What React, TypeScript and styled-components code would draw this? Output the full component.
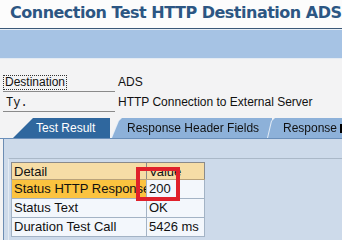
import React from "react";
import styled, { createGlobalStyle } from "styled-components";

const Global = createGlobalStyle`
  html, body { margin: 0; padding: 0; }
  body {
    width: 342px; height: 240px; overflow: hidden;
    background: #f3f3f4;
    font-family: "Liberation Sans", Arial, sans-serif;
  }
`;

const Page = styled.div`
  width: 342px;
  height: 240px;
  overflow: hidden;
  display: flex;
  flex-direction: column;
`;

const TitleBar = styled.div`
  height: 29px;
  flex: none;
  background: #fcfcfc;
  border-bottom: 1px solid #3b5877;
  box-sizing: border-box;
  padding: 3px 0 0 10px;
  white-space: nowrap;
  overflow: hidden;
`;

const Title = styled.h1`
  margin: 0;
  font-family: "DejaVu Sans", Verdana, sans-serif;
  font-weight: bold;
  font-size: 16px;
  line-height: 20px;
  color: #2c5683;
  letter-spacing: -0.5px;
`;

const Toolbar = styled.div`
  height: 28px;
  flex: none;
  background: #a6c3e4;
  border-top: 1px solid #e6eef7;
  border-bottom: 1px solid #e4ebf3;
`;

const Form = styled.div`
  display: flex;
  flex-direction: column;
  padding: 13px 0 0 3px;
`;

const FieldRow = styled.div`
  display: flex;
  align-items: flex-end;
  height: 20px;
`;

const Label = styled.div<{ $mono?: boolean }>`
  width: 112px;
  height: 20px;
  box-sizing: border-box;
  border-bottom: 1px solid #8a8a8a;
  display: flex;
  align-items: flex-end;
  padding-bottom: 1px;
  font-family: ${(p) => (p.$mono ? '"Liberation Mono", "Courier New", monospace' : '"Liberation Sans", Arial, sans-serif')};
  font-size: 12px;
  color: #111;
  padding-left: ${(p) => (p.$mono ? "3px" : "0")};
`;

const LabelText = styled.span<{ $focus?: boolean }>`
  border: 1px dotted ${(p) => (p.$focus ? "#333" : "transparent")};
  padding: 0 1px;
  line-height: 13px;
`;

const Value = styled.div`
  margin-left: 3px;
  padding-bottom: 3px;
  font-size: 12px;
  line-height: 14px;
  color: #111;
  white-space: nowrap;
`;

const TabStrip = styled.div`
  margin-top: 6px;
  height: 20px;
  flex: none;
  display: flex;
  align-items: flex-end;
  padding-left: 13px;
  border-bottom: 1px solid #6a8fba;
  white-space: nowrap;
  overflow: hidden;
`;

const Tab = styled.div<{ $active?: boolean; $slant: number; $width: number }>`
  flex: none;
  width: ${(p) => p.$width}px;
  height: 20px;
  box-sizing: border-box;
  padding-left: ${(p) => p.$slant + 3}px;
  background: ${(p) => (p.$active ? "#2f679e" : "#8db1d9")};
  color: ${(p) => (p.$active ? "#ffffff" : "#111")};
  font-size: 12px;
  line-height: 19px;
  clip-path: polygon(0 100%, ${(p) => p.$slant - 3}px 3px, ${(p) => p.$slant}px 0, 100% 0, 100% 100%);
  display: flex;
  align-items: center;
`;

const TabEdge = styled.div<{ $overlap?: number }>`
  flex: none;
  display: flex;
  margin-left: ${(p) => (p.$overlap ? -p.$overlap : 0)}px;
  filter: drop-shadow(-1px 0 0 #e6eef7);
`;

const TabText = styled.span<{ $offset?: number }>`
  margin-left: ${(p) => p.$offset ?? 0}px;
`;

const Block = styled.span`
  display: inline-block;
  width: 5px;
  height: 9px;
  background: #000;
  margin-left: 3px;
`;

const Panel = styled.div`
  flex: 1;
  margin-left: 3px;
  background: #cddaea;
  border-left: 1px solid #6d8db3;
  padding: 19px 0 0 4px;
`;

const TableArea = styled.div`
  height: 100%;
  border-top: 1px solid #aab8c8;
  border-left: 1px solid #e4ebf3;
  box-sizing: border-box;
  padding: 3px 0 0 2px;
`;

const TableWrap = styled.div`
  position: relative;
  width: 187px;
`;

const Table = styled.table`
  border-collapse: collapse;
  font-size: 13px;
  color: #111;
  table-layout: fixed;
  width: 187px;
`;

const HeadRow = styled.tr`
  height: 17px;
`;

const BodyRow = styled.tr`
  height: 19px;
`;

const HeadCell = styled.th<{ $w: number }>`
  width: ${(p) => p.$w}px;
  padding: 0 0 0 2px;
  text-align: left;
  font-weight: normal;
  background: #f6dda6;
  border: 1px solid #8a8a8a;
  border-bottom-color: #b9a27a;
  overflow: hidden;
  white-space: nowrap;
  line-height: 15px;
`;

const Cell = styled.td<{ $hi?: boolean }>`
  padding: 0 0 0 2px;
  background: ${(p) => (p.$hi ? "#fbc33f" : "#f3f7fc")};
  border: 1px solid #a3b3c5;
  white-space: nowrap;
  overflow: hidden;
  text-overflow: clip;
  line-height: 16px;
`;

const Marker = styled.div`
  position: absolute;
  left: 125px;
  top: 5px;
  width: 44px;
  height: 34px;
  box-sizing: border-box;
  border: 4px solid #e0212b;
  pointer-events: none;
`;

const rows = [
  { detail: "Status HTTP Response", value: "200", hi: true },
  { detail: "Status Text", value: "OK" },
  { detail: "Duration Test Call", value: "5426 ms" },
];

export default function App() {
  return (
    <Page>
      <Global />
      <TitleBar>
        <Title>Connection Test HTTP Destination ADS</Title>
      </TitleBar>
      <Toolbar />
      <Form>
        <FieldRow>
          <Label>
            <LabelText $focus>Destination</LabelText>
          </Label>
          <Value>ADS</Value>
        </FieldRow>
        <FieldRow>
          <Label $mono>Ty.</Label>
          <Value>HTTP Connection to External Server</Value>
        </FieldRow>
      </Form>
      <TabStrip>
        <Tab $active $slant={20} $width={97}>
          <TabText>Test Result</TabText>
        </Tab>
        <TabEdge $overlap={-2}>
          <Tab $slant={10} $width={160}>
            <TabText $offset={2}>Response Header Fields</TabText>
          </Tab>
        </TabEdge>
        <TabEdge $overlap={4}>
          <Tab $slant={7} $width={80}>
            <TabText $offset={5}>Response</TabText>
            <Block />
          </Tab>
        </TabEdge>
      </TabStrip>
      <Panel>
        <TableArea>
          <TableWrap>
            <Table>
              <thead>
                <HeadRow>
                  <HeadCell $w={132}>Detail</HeadCell>
                  <HeadCell $w={55}>Value</HeadCell>
                </HeadRow>
              </thead>
              <tbody>
                {rows.map((r) => (
                  <BodyRow key={r.detail}>
                    <Cell $hi={r.hi}>{r.detail}</Cell>
                    <Cell>{r.value}</Cell>
                  </BodyRow>
                ))}
              </tbody>
            </Table>
            <Marker />
          </TableWrap>
        </TableArea>
      </Panel>
    </Page>
  );
}
